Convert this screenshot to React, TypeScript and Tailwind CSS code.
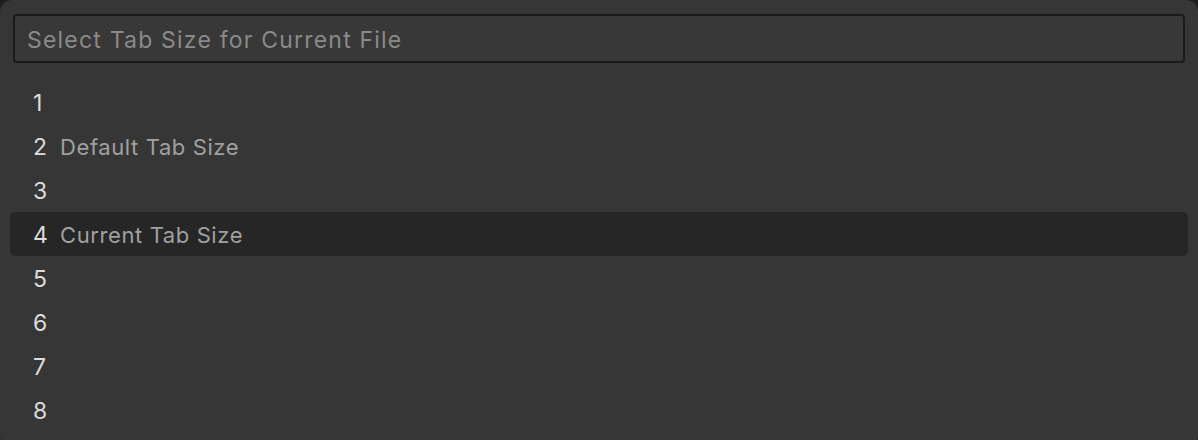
import React from 'react'

const items: { n: string; label?: string }[] = [
  { n: '1' },
  { n: '2', label: 'Default Tab Size' },
  { n: '3' },
  { n: '4', label: 'Current Tab Size' },
  { n: '5' },
  { n: '6' },
  { n: '7' },
  { n: '8' },
]

const selected = '4'

export default function App() {
  return (
    <div
      className="w-[1198px] h-[440px] bg-[#1e1e1e] overflow-hidden"
      style={{ fontFamily: 'Inter, "Noto Sans", sans-serif' }}
    >
      <div className="h-[448px] bg-[#363636] rounded-[12px] px-[10px] pt-[14px]">
        <div className="mx-[3px] h-[49px] rounded-[4px] border-2 border-[#1b1b1b] bg-[#383838] flex items-center px-[12px]">
          <span className="text-[23px] text-[#8a8a8a] tracking-[1.2px] mt-[3px]">Select Tab Size for Current File</span>
        </div>
        <div className="mt-[17px] flex flex-col">
          {items.map((it) => (
            <div
              key={it.n}
              className={`h-[44px] flex items-center pl-[23px] rounded-[5px] ${
                it.n === selected ? 'bg-[#262626]' : ''
              }`}
            >
              <span className="text-[23px] text-[#dcdcdc] w-[27px] mt-[3px]">{it.n}</span>
              {it.label && (
                <span className="text-[22px] text-[#a0a0a0] tracking-[0.6px] mt-[2px]">{it.label}</span>
              )}
            </div>
          ))}
        </div>
      </div>
    </div>
  )
}
